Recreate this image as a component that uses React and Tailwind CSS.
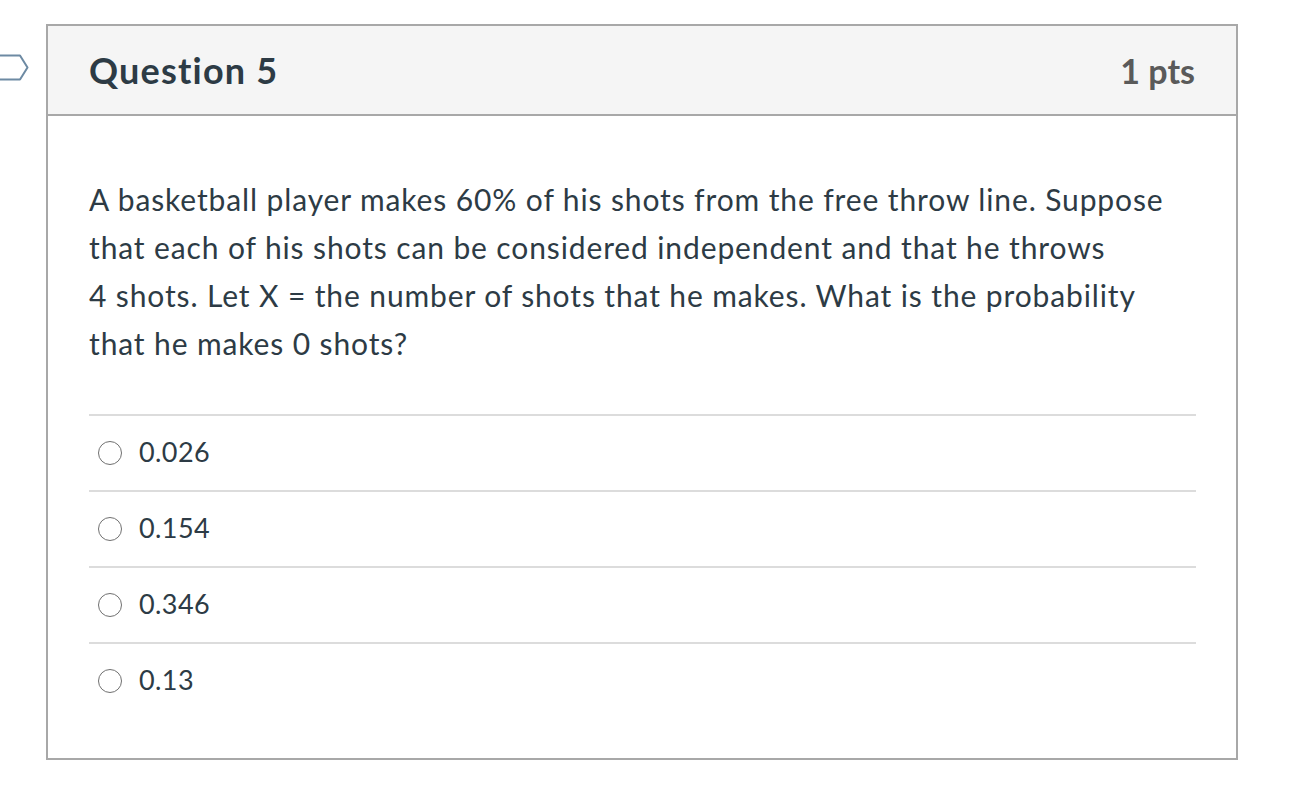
import React from "react";

const answers = ["0.026", "0.154", "0.346", "0.13"];

export default function App() {
  return (
    <div
      className="relative w-[1296px] h-[810px] bg-white"
      style={{ fontFamily: "Lato, 'Open Sans', sans-serif" }}
    >
      <svg
        className="absolute left-0 top-[54px]"
        width="32"
        height="28"
        viewBox="0 0 32 28"
      >
        <path
          d="M-4 1.5 H20 L27.5 13.5 L20 25.5 H-4 Z"
          fill="white"
          stroke="#6d8aa3"
          strokeWidth="2"
          strokeLinejoin="round"
        />
      </svg>
      <div className="pt-[24px] pl-[46px]">
        <div className="w-[1192px] h-[736px] border-2 border-[#a8a8a8] flex flex-col">
          <div className="h-[90px] bg-[#f5f5f5] border-b-2 border-[#a8a8a8] flex items-center justify-between pl-[41px] pr-[41px] shrink-0">
            <span className="text-[36px] font-bold text-[#2d3b45] tracking-[1.2px]">
              Question 5
            </span>
            <span className="text-[34px] font-bold text-[#5a5a5a]">1 pts</span>
          </div>
          <div className="pl-[41px] pr-[40px] pt-[59px]">
            <p className="text-[30px] leading-[48px] text-[#2d3b45] tracking-[0.88px] whitespace-nowrap">
              A basketball player makes 60% of his shots from the free throw line. Suppose
              <br />
              that each of his shots can be considered independent and that he throws
              <br />
              4 shots. Let X = the number of shots that he makes. What is the probability
              <br />
              that he makes 0 shots?
            </p>
            <div className="mt-[47px]">
              {answers.map((a) => (
                <div
                  key={a}
                  className="h-[76px] border-t-2 border-[#dcdcdc] flex items-center"
                >
                  <span className="ml-[9px] w-[24px] h-[24px] rounded-full border-[1.5px] border-[#707070] bg-white" />
                  <span className="ml-[17px] -mt-[2px] text-[27px] tracking-[0.4px] text-[#2d3b45]">{a}</span>
                </div>
              ))}
            </div>
          </div>
        </div>
      </div>
    </div>
  );
}
